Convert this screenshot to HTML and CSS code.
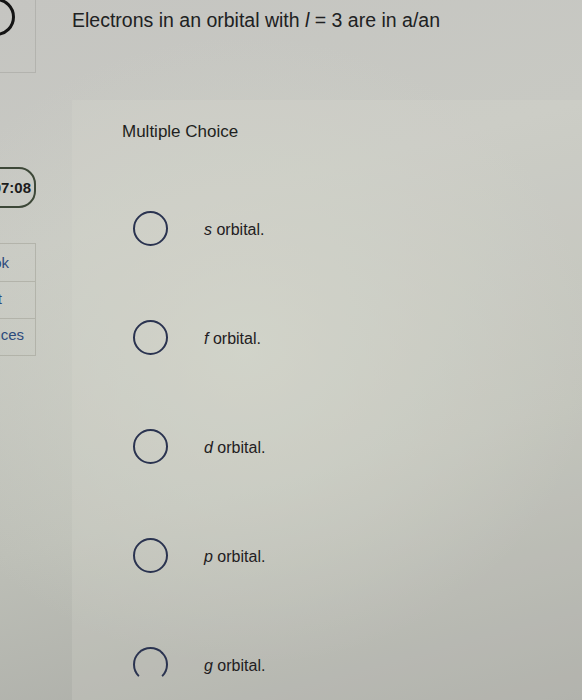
FILE: index.html
```html
<!DOCTYPE html>
<html lang="en">
<head>
<meta charset="utf-8">
<title>Multiple Choice</title>
<link rel="stylesheet" href="styles.css">
</head>
<body>
<div class="page">
  <aside class="sidebar">
    <div class="logo-box"><span class="ring"></span></div>
    <div class="timer-row"><div class="timer">07:08</div></div>
    <ul class="tools">
      <li class="tool tool-ebook">eBook</li>
      <li class="tool tool-print">Print</li>
      <li class="tool tool-refs">References</li>
    </ul>
  </aside>
  <main class="main">
    <h1 class="question">Electrons in an orbital with <i>l</i> = 3 are in a/an</h1>
    <section class="panel">
      <h2 class="type">Multiple Choice</h2>
      <ul class="options">
        <li class="option"><span class="radio"></span><span class="label"><i>s</i> orbital.</span></li>
        <li class="option"><span class="radio"></span><span class="label"><i>f</i> orbital.</span></li>
        <li class="option"><span class="radio"></span><span class="label"><i>d</i> orbital.</span></li>
        <li class="option"><span class="radio"></span><span class="label"><i>p</i> orbital.</span></li>
        <li class="option"><span class="radio radio-cut"></span><span class="label"><i>g</i> orbital.</span></li>
      </ul>
    </section>
  </main>
</div>
</body>
</html>
```
FILE: styles.css
```css
html, body {
  margin: 0;
  padding: 0;
  height: 100%;
}
body {
  font-family: "Liberation Sans", Arial, sans-serif;
  color: #222324;
  background:
    radial-gradient(ellipse 60% 45% at 42% 50%, rgba(210, 213, 202, 0.8), rgba(210, 213, 202, 0) 100%),
    linear-gradient(165deg, #c5c5c1 0%, #c8c9c3 30%, #bdbfb7 65%, #a7a8a3 100%);
  overflow: hidden;
}
.page {
  display: flex;
  height: 700px;
  width: 582px;
}
.sidebar {
  width: 37px;
  flex: none;
  overflow: hidden;
  display: flex;
  flex-direction: column;
}
.logo-box {
  height: 72px;
  width: 35px;
  border-right: 1px solid rgba(150, 150, 145, 0.4);
  border-bottom: 1px solid rgba(150, 150, 145, 0.4);
  display: flex;
  justify-content: flex-end;
  align-items: flex-start;
}
.ring {
  flex: none;
  width: 32px;
  height: 32px;
  border: 3px solid #141414;
  border-radius: 50%;
  margin-top: -2px;
  margin-right: 20px;
}
.timer-row {
  margin-top: 94px;
  display: flex;
  justify-content: flex-end;
}
.timer {
  flex: none;
  width: 56px;
  height: 37px;
  border: 2px solid #3d4838;
  border-radius: 17px;
  display: flex;
  align-items: center;
  justify-content: flex-end;
  padding-right: 3px;
  font-weight: bold;
  font-size: 15px;
  color: #1c1c1c;
  margin-right: 1px;
}
.tools {
  list-style: none;
  margin: 35px 0 0 0;
  padding: 0;
  width: 36px;
  border: 1px solid rgba(150, 150, 140, 0.45);
  border-left: none;
  box-sizing: border-box;
}
.tool {
  height: 37px;
  box-sizing: border-box;
  display: flex;
  align-items: center;
  justify-content: flex-end;
  font-size: 15px;
  color: #2d4a7c;
  white-space: nowrap;
  border-top: 1px solid rgba(150, 150, 140, 0.45);
}
.tool:first-child {
  border-top: none;
}
.tool-ebook { padding-right: 26px; }
.tool-print { padding-right: 33px; padding-bottom: 4px; }
.tool-refs { padding-right: 11px; padding-bottom: 6px; }
.main {
  flex: 1;
  display: flex;
  flex-direction: column;
  padding-left: 35px;
}
.question {
  margin: 0;
  padding-top: 9px;
  height: 63px;
  box-sizing: border-box;
  font-size: 19.5px;
  font-weight: normal;
  color: #202122;
}
.panel {
  margin-top: 37px;
  flex: 1;
  background: rgba(218, 219, 211, 0.22);
  padding-left: 50px;
  padding-top: 22px;
}
.type {
  margin: 0;
  font-size: 17px;
  font-weight: normal;
  color: #1e1f20;
}
.options {
  list-style: none;
  margin: 0;
  padding: 69px 0 0 11px;
  display: flex;
  flex-direction: column;
  gap: 74px;
}
.option {
  display: flex;
  align-items: center;
  height: 35px;
}
.radio {
  flex: none;
  width: 31px;
  height: 31px;
  border: 2px solid #2a3350;
  border-radius: 50%;
}
.radio-cut {
  border-bottom-color: transparent;
}
.label {
  margin-left: 36px;
  font-size: 16px;
  color: #1f2022;
  padding-top: 3px;
}
```
